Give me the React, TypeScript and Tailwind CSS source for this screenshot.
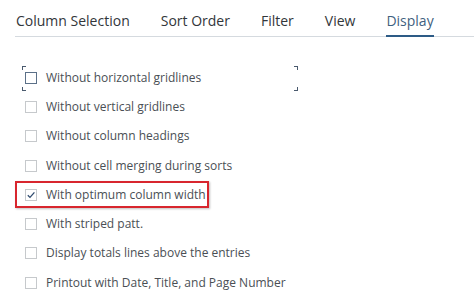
import React from "react";

const tabs = ["Column Selection", "Sort Order", "Filter", "View", "Display"];

const options = [
	{ label: "Without horizontal gridlines", focused: true },
	{ label: "Without vertical gridlines" },
	{ label: "Without column headings" },
	{ label: "Without cell merging during sorts" },
	{ label: "With optimum column width", checked: true, highlight: true },
	{ label: "With striped patt." },
	{ label: "Display totals lines above the entries" },
	{ label: "Printout with Date, Title, and Page Number" },
];

function Checkbox({ checked, focused }: { checked?: boolean; focused?: boolean }): React.ReactElement {
	return (
		<span
			className={`flex h-[12px] w-[12px] shrink-0 items-center justify-center border bg-white ${
				focused ? "border-[#5b7088]" : "border-[#c6c9cc]"
			}`}
		>
			{checked ? (
				<svg width="10" height="10" viewBox="0 0 10 10" fill="none">
					<path d="M1.8 5.2 L4 7.4 L8.4 2.4" stroke="#2e4a6e" strokeWidth="1.3" />
				</svg>
			) : null}
		</span>
	);
}

function Option({
	label,
	checked,
	focused,
	highlight,
}: {
	label: string;
	checked?: boolean;
	focused?: boolean;
	highlight?: boolean;
}): React.ReactElement {
	return (
		<div className="relative flex h-[29.3px] items-center gap-[9px] pl-[25px]">
			{highlight ? (
				<span className="pointer-events-none absolute left-[15px] top-[1px] h-[27px] w-[194px] border-2 border-[#d8262e] shadow-[1px_1px_2px_rgba(0,0,0,0.25)]" />
			) : null}
			{focused ? (
				<>
					<span className="absolute left-[22px] top-[3px] h-[4px] w-[4px] border-l border-t border-[#4a5a6e]" />
					<span className="absolute bottom-[1px] left-[22px] h-[4px] w-[4px] border-b border-l border-[#4a5a6e]" />
					<span className="absolute left-[294px] top-[3px] h-[4px] w-[4px] border-r border-t border-[#4a5a6e]" />
					<span className="absolute bottom-[1px] left-[294px] h-[4px] w-[4px] border-b border-r border-[#4a5a6e]" />
				</>
			) : null}
			<Checkbox checked={checked} focused={focused} />
			<span className="text-[12px] leading-none text-[#4a4f55]">{label}</span>
		</div>
	);
}

export default function App(): React.ReactElement {
	return (
		<div
			className="h-[297px] w-[474px] overflow-hidden bg-white"
			style={{ fontFamily: '"Open Sans", "Noto Sans", sans-serif' }}
		>
			<div className="ml-[15px] flex h-[37px] items-end gap-[31px] border-b border-[#d5dadf] pl-[1px]">
				{tabs.map((tab) => {
					const active = tab === "Display";
					return (
						<div
							key={tab}
							className={`relative pb-[8px] text-[14px] leading-none ${
								active ? "text-[#3f5f80]" : "text-[#32363a]"
							}`}
						>
							{tab}
							{active ? (
								<span className="absolute -bottom-[1px] left-0 right-0 h-[2px] bg-[#2d5b86]" />
							) : null}
						</div>
					);
				})}
			</div>
			<div className="pt-[26px]">
				{options.map((o) => (
					<Option key={o.label} {...o} />
				))}
			</div>
		</div>
	);
}
